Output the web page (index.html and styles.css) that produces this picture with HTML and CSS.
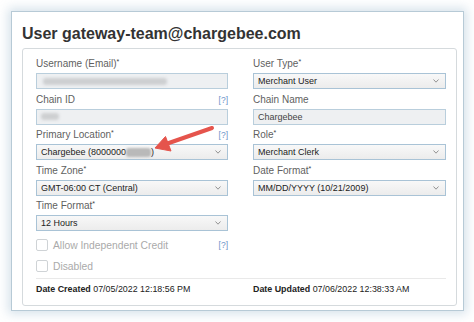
FILE: index.html
```html
<!DOCTYPE html>
<html>
<head>
<meta charset="utf-8">
<link rel="stylesheet" href="styles.css">
</head>
<body>
<div class="card">
  <h1 class="title">User gateway-team@chargebee.com</h1>
  <div class="panel">
    <div class="cols">
      <div class="col">
        <div class="field">
          <div class="label"><span>Username (Email)<sup>*</sup></span></div>
          <div class="control readonly"><span class="blur blur-user"></span></div>
        </div>
        <div class="field">
          <div class="label"><span>Chain ID</span><span class="help">[?]</span></div>
          <div class="control readonly"><span class="blur blur-chain"></span></div>
        </div>
        <div class="field">
          <div class="label"><span>Primary Location<sup>*</sup></span><span class="help">[?]</span></div>
          <div class="control select"><span>Chargebee (8000000</span><span class="blur blur-loc"></span><span>)</span>
            <svg class="chev" viewBox="0 0 6 4"><polyline points="0.5,0.5 3,3.2 5.5,0.5" fill="none" stroke="#888" stroke-width="0.9"/></svg>
          </div>
        </div>
        <div class="field">
          <div class="label"><span>Time Zone<sup>*</sup></span></div>
          <div class="control select"><span>GMT-06:00 CT (Central)</span>
            <svg class="chev" viewBox="0 0 6 4"><polyline points="0.5,0.5 3,3.2 5.5,0.5" fill="none" stroke="#888" stroke-width="0.9"/></svg>
          </div>
        </div>
        <div class="field">
          <div class="label"><span>Time Format<sup>*</sup></span></div>
          <div class="control select"><span>12 Hours</span>
            <svg class="chev" viewBox="0 0 6 4"><polyline points="0.5,0.5 3,3.2 5.5,0.5" fill="none" stroke="#888" stroke-width="0.9"/></svg>
          </div>
        </div>
        <div class="checks">
          <div class="check"><span class="box"></span><span>Allow Independent Credit</span><span class="help">[?]</span></div>
          <div class="check"><span class="box"></span><span>Disabled</span></div>
        </div>
      </div>
      <div class="col">
        <div class="field">
          <div class="label"><span>User Type<sup>*</sup></span></div>
          <div class="control select"><span>Merchant User</span>
            <svg class="chev" viewBox="0 0 6 4"><polyline points="0.5,0.5 3,3.2 5.5,0.5" fill="none" stroke="#888" stroke-width="0.9"/></svg>
          </div>
        </div>
        <div class="field">
          <div class="label"><span>Chain Name</span></div>
          <div class="control readonly"><span class="muted">Chargebee</span></div>
        </div>
        <div class="field">
          <div class="label"><span>Role<sup>*</sup></span></div>
          <div class="control select"><span>Merchant Clerk</span>
            <svg class="chev" viewBox="0 0 6 4"><polyline points="0.5,0.5 3,3.2 5.5,0.5" fill="none" stroke="#888" stroke-width="0.9"/></svg>
          </div>
        </div>
        <div class="field">
          <div class="label"><span>Date Format<sup>*</sup></span></div>
          <div class="control select"><span>MM/DD/YYYY (10/21/2009)</span>
            <svg class="chev" viewBox="0 0 6 4"><polyline points="0.5,0.5 3,3.2 5.5,0.5" fill="none" stroke="#888" stroke-width="0.9"/></svg>
          </div>
        </div>
      </div>
    </div>
    <div class="divider"></div>
    <div class="footer">
      <div><b>Date Created</b> 07/05/2022 12:18:56 PM</div>
      <div><b>Date Updated</b> 07/06/2022 12:38:33 AM</div>
    </div>
  </div>
</div>
<svg class="arrow" width="474" height="322" viewBox="0 0 474 322">
  <line x1="212" y1="128" x2="166" y2="144" stroke="#e5544c" stroke-width="4" stroke-linecap="round"/>
  <polygon points="155,148 165.5,136.5 171,151" fill="#e5544c" stroke="#e5544c" stroke-width="1" stroke-linejoin="round"/>
</svg>
</body>
</html>
```

FILE: styles.css
```css
body {
  margin: 0;
  background: #fff;
  font-family: "Liberation Sans", Arial, Helvetica, sans-serif;
  position: relative;
  width: 474px;
  height: 322px;
  overflow: hidden;
}

.card {
  margin: 11px 0 0 11px;
  width: 453px;
  height: 300px;
  box-sizing: border-box;
  border: 1px solid #b7cad6;
  box-shadow: 0 0 10px 3px rgba(120, 160, 190, 0.3);
  padding: 12px 6px 0 10px;
  background: #fff;
}

.title {
  margin: 0;
  font-size: 16px;
  line-height: 20px;
  font-weight: bold;
  color: #333;
}

.panel {
  margin-top: 4px;
  height: 258px;
  box-sizing: border-box;
  border: 1px solid #d5dadd;
  border-radius: 3px;
  padding: 8px 10px 0 13px;
}

.cols {
  display: grid;
  grid-template-columns: 192px 193px;
  column-gap: 25px;
}

.field {
  margin-bottom: 3.5px;
}

.label {
  display: flex;
  justify-content: space-between;
  align-items: center;
  height: 14px;
  line-height: 14px;
  margin-bottom: 2px;
  font-size: 10px;
  color: #5f5f5f;
}

.label sup {
  font-size: 7px;
  vertical-align: top;
  line-height: 10px;
  color: #444;
}

.help {
  font-size: 8.5px;
  color: #6d93c9;
}

.control {
  height: 16px;
  box-sizing: border-box;
  border: 1px solid #a9c3d6;
  display: flex;
  align-items: center;
  padding: 0 4px;
  font-size: 9px;
  color: #222;
}

.control.readonly {
  background: #eef0f2;
  border-color: #b9cedc;
}

.control.select {
  background: linear-gradient(#f8f8f8, #ececec);
}

.muted {
  color: #444;
}

.chev {
  margin-left: auto;
  width: 6px;
  height: 4px;
  margin-right: 2px;
}

.blur {
  display: inline-block;
  height: 7px;
  border-radius: 3px;
  background: #cdcfd1;
  filter: blur(1.5px);
}

.blur-user {
  width: 124px;
  margin-left: 2px;
}

.blur-chain {
  width: 18px;
  margin-left: 0;
}

.blur-loc {
  width: 25px;
  height: 9px;
  background: #b9b9b9;
  filter: blur(1px);
}

.checks {
  margin-top: 2px;
}

.check {
  height: 21px;
  display: flex;
  align-items: center;
  gap: 5px;
  font-size: 10.3px;
  color: #aaa;
}

.check .help {
  margin-left: auto;
}

.box {
  width: 12px;
  height: 12px;
  box-sizing: border-box;
  border: 1px solid #cfd3d6;
  border-radius: 2px;
  background: #fff;
}

.divider {
  height: 1px;
  background: #e9e9e9;
  margin-top: 1px;
}

.footer {
  display: grid;
  grid-template-columns: 192px 193px;
  column-gap: 25px;
  margin-top: 3px;
  font-size: 8.9px;
  line-height: 14px;
  color: #222;
}

.arrow {
  position: absolute;
  left: 0;
  top: 0;
  pointer-events: none;
}
```
